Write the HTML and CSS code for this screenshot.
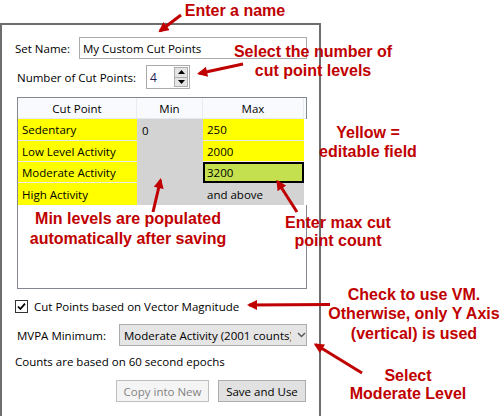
FILE: index.html
```html
<!DOCTYPE html>
<html>
<head>
<meta charset="utf-8">
<link rel="stylesheet" href="styles.css">
</head>
<body>
<div class="page">
  <div class="panel">
    <div class="row name-row">
      <span class="lbl name-lbl">Set Name:</span>
      <div class="textbox name-box">My Custom Cut Points</div>
    </div>
    <div class="row count-row">
      <span class="lbl count-lbl">Number of Cut Points:</span>
      <div class="spin">
        <div class="spin-val">4</div>
        <div class="spin-btns">
          <div class="spin-btn"><svg width="7" height="4" viewBox="0 0 7 4"><path d="M0 4 L3.5 0 L7 4 Z" fill="#000"/></svg></div>
          <div class="spin-btn"><svg width="7" height="4" viewBox="0 0 7 4"><path d="M0 0 L7 0 L3.5 4 Z" fill="#000"/></svg></div>
        </div>
      </div>
    </div>
    <div class="grid">
      <div class="grid-head">
        <div class="hcell">Cut Point</div>
        <div class="hcell">Min</div>
        <div class="hcell">Max</div>
        <div class="hcell hfill"></div>
      </div>
      <div class="grid-body">
        <div class="cell edit">Sedentary</div>
        <div class="cell ro">0</div>
        <div class="cell edit">250</div>
        <div class="cell fill"></div>

        <div class="cell edit">Low Level Activity</div>
        <div class="cell ro"></div>
        <div class="cell edit">2000</div>
        <div class="cell fill"></div>

        <div class="cell edit">Moderate Activity</div>
        <div class="cell ro"></div>
        <div class="cell active">3200</div>
        <div class="cell fill"></div>

        <div class="cell edit last">High Activity</div>
        <div class="cell ro"></div>
        <div class="cell ro">and above</div>
        <div class="cell fill"></div>
      </div>
    </div>
    <div class="row check-row">
      <span class="checkbox"><svg width="11" height="11" viewBox="0 0 11 11"><path d="M2 5.5 L4.4 8 L9 2.6" fill="none" stroke="#000" stroke-width="1.8"/></svg></span>
      <span class="lbl check-lbl">Cut Points based on Vector Magnitude</span>
    </div>
    <div class="row mvpa-row">
      <span class="lbl mvpa-lbl">MVPA Minimum:</span>
      <div class="select">
        <span class="select-text">Moderate Activity (2001 counts)</span>
        <svg class="chev" width="9" height="6" viewBox="0 0 9 6"><path d="M1 1 L4.5 4.5 L8 1" fill="none" stroke="#555" stroke-width="1.4"/></svg>
      </div>
    </div>
    <div class="counts">Counts are based on 60 second epochs</div>
    <div class="row btn-row">
      <div class="btn disabled">Copy into New</div>
      <div class="btn">Save and Use</div>
    </div>
  </div>

  <div class="note n-name">Enter a name</div>
  <div class="note n-count">Select the number of<br>cut point levels</div>
  <div class="note n-yellow">Yellow =<br>editable field</div>
  <div class="note n-min">Min levels are populated<br>automatically after saving</div>
  <div class="note n-max">Enter max cut<br>point count</div>
  <div class="note n-vm">Check to use VM.<br>Otherwise, only Y Axis<br>(vertical) is used</div>
  <div class="note n-mod">Select<br>Moderate Level</div>

  <svg class="arrows" width="504" height="416" viewBox="0 0 504 416">
    <defs>
      <marker id="ah" viewBox="0 0 10 10" refX="8" refY="5" markerWidth="3.6" markerHeight="3.4" orient="auto" markerUnits="strokeWidth">
        <path d="M0 0 L10 5 L0 10 Z" fill="#c00000"/>
      </marker>
    </defs>
    <g stroke="#c00000" stroke-width="3" fill="none" marker-end="url(#ah)">
      <line x1="181" y1="15" x2="160" y2="31"/>
      <line x1="243" y1="64" x2="199" y2="73.5"/>
      <line x1="153" y1="212" x2="160.5" y2="180"/>
      <line x1="297" y1="212" x2="277.5" y2="181.5"/>
      <line x1="330" y1="304.5" x2="249" y2="305"/>
      <line x1="362" y1="373" x2="315.5" y2="344.5"/>
    </g>
  </svg>
</div>
</body>
</html>
```
FILE: styles.css
```css
* { box-sizing: border-box; }
html, body { margin: 0; padding: 0; background: #fff; }
.page {
  position: relative;
  width: 504px;
  height: 416px;
  overflow: hidden;
  font-family: "Open Sans", "Noto Sans", sans-serif;
  font-size: 11.5px;
  color: #000;
}
.panel {
  margin-top: 23px;
  width: 321px;
  height: 400px;
  border: 2px solid #6e6e6e;
  border-bottom: none;
  padding: 12px 12px 0 13px;
  display: flex;
  flex-direction: column;
}
.row { display: flex; align-items: center; }
.lbl { white-space: nowrap; }
.name-row { height: 22px; }
.name-lbl { width: 64px; }
.textbox {
  border: 1px solid #ababab;
  height: 22px;
  display: flex;
  align-items: center;
  padding-left: 3px;
}
.name-box { width: 228px; }
.count-row { margin-top: 6px; height: 24px; padding-left: 2px; }
.count-lbl { width: 129px; }
.spin {
  width: 44px;
  height: 24px;
  border: 1px solid #ababab;
  display: flex;
}
.spin-val { flex: 1; padding-left: 3px; display: flex; align-items: center; color: #1b1b50; font-size: 12px; }
.spin-btns { width: 15px; display: flex; flex-direction: column; padding: 1px 1px 1px 0; }
.spin-btn {
  flex: 1;
  background: #e4e4e4;
  border: 1px solid #adadad;
  display: flex;
  align-items: center;
  justify-content: center;
}
.spin-btn + .spin-btn { border-top: none; }

.grid {
  margin-top: 8px;
  margin-left: 2px;
  width: 290px;
  height: 192px;
  border: 1px solid #828790;
  background: #fff;
}
.grid-head {
  display: grid;
  grid-template-columns: 119px 66px 101px 2px;
  height: 21px;
  background: #f9fafd;
  border-bottom: 1px solid #e3e8f1;
}
.hcell {
  display: flex;
  align-items: center;
  justify-content: center;
  border-right: 1px solid #e8ebf3;
}
.hcell.hfill { border-right: none; }
.grid-body {
  display: grid;
  grid-template-columns: 119px 66px 101px 2px;
  grid-template-rows: 22px 21px 21px 22px;
}
.cell {
  display: flex;
  align-items: center;
  padding-left: 4px;
  white-space: nowrap;
}
.edit { background: #ffff00; border-bottom: 1px solid #ececec; }
.edit.last { border-bottom: none; }
.ro { background: #d3d3d3; padding-left: 5px; }
.ro:nth-child(3n) { padding-left: 4px; }
.fill { background: #fff; }
.active {
  background: #c4e04e;
  border: 2px solid #000;
  padding-left: 2px;
}

.check-row { margin-top: 11px; height: 13px; }
.checkbox {
  width: 13px;
  height: 13px;
  border: 1px solid #333;
  background: #fff;
  display: flex;
  align-items: center;
  justify-content: center;
}
.check-lbl { margin-left: 6px; }

.mvpa-row { margin-top: 11px; height: 22px; padding-left: 2px; }
.mvpa-lbl { width: 102px; }
.select {
  width: 188px;
  height: 22px;
  background: #e5e5e5;
  border: 1px solid #acacac;
  display: flex;
  align-items: center;
  padding-left: 4px;
}
.select-text { width: 167px; overflow: hidden; white-space: nowrap; }
.chev { margin-left: 6px; }

.counts { margin-top: 8px; height: 16px; line-height: 16px; }

.btn-row { margin-top: 10px; justify-content: flex-end; gap: 9px; margin-right: 1px; }
.btn {
  height: 22px;
  display: flex;
  align-items: center;
  justify-content: center;
  background: #e1e1e1;
  border: 1px solid #adadad;
  width: 88px;
}
.btn.disabled {
  width: 93px;
  background: #f4f4f4;
  border-color: #bfbfbf;
  color: #838383;
}

.note {
  position: absolute;
  width: 200px;
  text-align: center;
  font-family: "Liberation Sans", Arial, sans-serif;
  font-weight: bold;
  font-size: 16px;
  line-height: 19.5px;
  color: #c00000;
  white-space: nowrap;
}
.n-name { left: 135px; top: 0.5px; }
.n-count { left: 213px; top: 41.5px; }
.n-yellow { left: 268px; top: 122.5px; line-height: 19px; }
.n-min { left: 28px; top: 208.5px; line-height: 20px; }
.n-max { left: 238px; top: 213.5px; line-height: 18.5px; }
.n-vm { left: 314px; top: 284.5px; }
.n-mod { left: 308px; top: 366.5px; line-height: 18px; }

.arrows { position: absolute; left: 0; top: 0; pointer-events: none; }
```
